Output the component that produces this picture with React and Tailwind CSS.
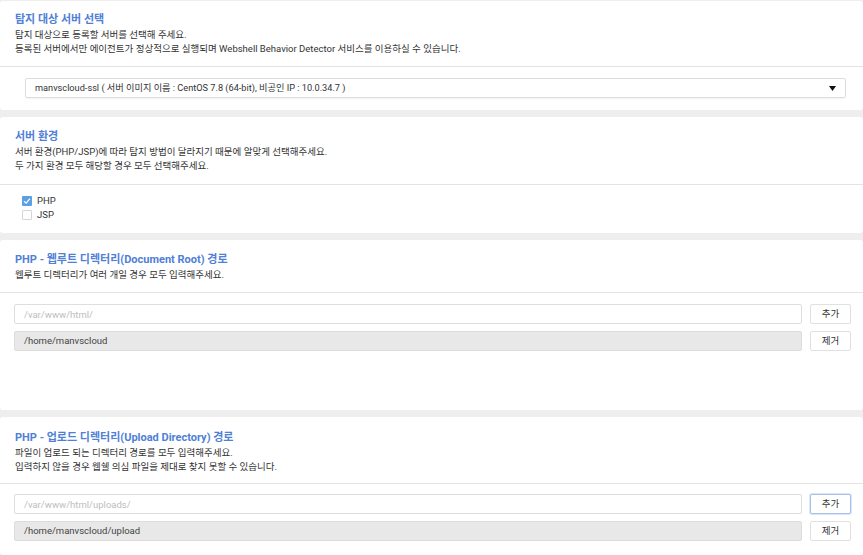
const font = { fontFamily: '"Roboto", "Noto Sans CJK KR", sans-serif' }

function Header({ title, lines, pad }) {
	return (
		<div className={`px-[15px] border-b border-[#e3e3e3] ${pad}`}>
			<h2 className="text-[11px] leading-4 font-bold text-[#4f80d6]">{title}</h2>
			{lines.map((l) => (
				<p key={l} className="text-[9.5px] leading-[14px] text-[#333]">{l}</p>
			))}
		</div>
	)
}

function PathRows({ placeholder, value, focused }) {
	return (
		<div className="flex flex-col gap-[7px] pl-[14px] pr-[12px]">
			<div className="flex gap-[8px]">
				<input
					className="flex-1 h-5 border border-[#dedede] rounded-[2px] pl-[9px] text-[9.5px] text-[#333] placeholder:text-[#bdbdbd] outline-none"
					placeholder={placeholder}
				/>
				<button
					className={`w-[41px] h-5 bg-white rounded-[2px] text-[9.5px] text-[#333] border ${focused ? "border-[#a9c1ea] shadow-[0_0_0_1px_#dbe6f7]" : "border-[#e0e0e0]"}`}
				>
					추가
				</button>
			</div>
			<div className="flex gap-[8px]">
				<div className="flex-1 h-5 border border-[#dcdcdc] rounded-[2px] bg-[#e8e8e8] pl-[9px] text-[9.5px] leading-[18px] text-[#444]">
					{value}
				</div>
				<button className="w-[41px] h-5 bg-white border border-[#e0e0e0] rounded-[2px] text-[9.5px] text-[#333]">
					제거
				</button>
			</div>
		</div>
	)
}

function Check({ label, checked }) {
	return (
		<label className="flex items-center gap-[5px] h-[14px] text-[9.5px] text-[#333]">
			<span
				className={`w-[10px] h-[10px] rounded-[1px] flex items-center justify-center ${checked ? "bg-[#5c9fe2]" : "bg-white border border-[#d6d6d6]"}`}
			>
				{checked && (
					<svg width="8" height="8" viewBox="0 0 8 8">
						<path d="M1 4.2 L3.1 6.2 L7 1.6" fill="none" stroke="white" strokeWidth="1.2" />
					</svg>
				)}
			</span>
			{label}
		</label>
	)
}

export default function App() {
	return (
		<div className="w-[863px] h-[555px] overflow-hidden bg-[#eeeeee] pt-px flex flex-col gap-[7px]" style={font}>
			<section className="bg-white rounded-[3px] shrink-0">
				<Header
					pad="pt-[11px] pb-[10px]"
					title="탐지 대상 서버 선택"
					lines={[
						"탐지 대상으로 등록할 서버를 선택해 주세요.",
						"등록된 서버에서만 에이전트가 정상적으로 실행되며 Webshell Behavior Detector 서비스를 이용하실 수 있습니다.",
					]}
				/>
				<div className="pt-[11px] pb-[12px] pl-[25px] pr-[17px]">
					<div className="h-5 border border-[#dddddd] rounded-[2px] shadow-[0_1px_1px_rgba(0,0,0,0.04)] flex items-center justify-between pl-[9px] pr-[9px]">
						<span className="text-[9.2px] text-[#333]">
							manvscloud-ssl ( 서버 이미지 이름 : CentOS 7.8 (64-bit), 비공인 IP : 10.0.34.7 )
						</span>
						<svg width="7" height="5" viewBox="0 0 7 5">
							<path d="M0 0 H7 L3.5 5 Z" fill="#111" />
						</svg>
					</div>
				</div>
			</section>

			<section className="bg-white rounded-[3px] shrink-0">
				<Header
					pad="pt-[12px] pb-[11px]"
					title="서버 환경"
					lines={[
						"서버 환경(PHP/JSP)에 따라 탐지 방법이 달라지기 때문에 알맞게 선택해주세요.",
						"두 가지 환경 모두 해당할 경우 모두 선택해주세요.",
					]}
				/>
				<div className="pt-[9px] pb-[11px] pl-[22px]">
					<Check label="PHP" checked />
					<Check label="JSP" />
				</div>
			</section>

			<section className="bg-white rounded-[3px] shrink-0">
				<Header
					pad="pt-[12px] pb-[10px]"
					title="PHP - 웹루트 디렉터리(Document Root) 경로"
					lines={["웹루트 디렉터리가 여러 개일 경우 모두 입력해주세요."]}
				/>
				<div className="pt-[11px] pb-[59px]">
					<PathRows placeholder="/var/www/html/" value="/home/manvscloud" />
				</div>
			</section>

			<section className="bg-white rounded-[3px] flex-1">
				<Header
					pad="pt-[13px] pb-[9px]"
					title="PHP - 업로드 디렉터리(Upload Directory) 경로"
					lines={[
						"파일이 업로드 되는 디렉터리 경로를 모두 입력해주세요.",
						"입력하지 않을 경우 웹쉘 의심 파일을 제대로 찾지 못할 수 있습니다.",
					]}
				/>
				<div className="pt-[10px]">
					<PathRows placeholder="/var/www/html/uploads/" value="/home/manvscloud/upload" focused />
				</div>
			</section>
		</div>
	)
}
